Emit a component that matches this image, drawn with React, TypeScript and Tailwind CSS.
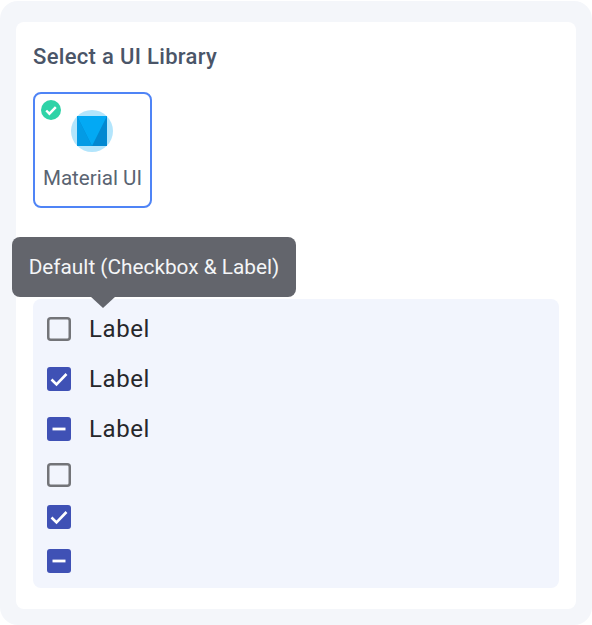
import React from "react";

const font = { fontFamily: "Roboto, sans-serif" };

function Box({ kind }: { kind: "empty" | "checked" | "mixed" }) {
  return (
    <svg width="24" height="24" viewBox="0 0 24 24" className="block shrink-0">
      {kind === "empty" ? (
        <rect x="1.25" y="1.25" width="21.5" height="21.5" rx="2.5" fill="none" stroke="#737478" strokeWidth="2.5" />
      ) : (
        <rect x="0" y="0" width="24" height="24" rx="3" fill="#3f51b5" />
      )}
      {kind === "checked" && <path d="M4.5 12.5l5 5 10-10.5" fill="none" stroke="#fff" strokeWidth="2.6" />}
      {kind === "mixed" && <path d="M5.5 12h13" fill="none" stroke="#fff" strokeWidth="2.8" />}
    </svg>
  );
}

function Row({ kind, label, h }: { kind: "empty" | "checked" | "mixed"; label?: boolean; h: string }) {
  return (
    <div className={`flex items-center gap-[18px] pl-[14px] ${h}`}>
      <Box kind={kind} />
      {label && <span className="text-[24px] leading-[28px] tracking-[0.6px] text-[#26272b]">Label</span>}
    </div>
  );
}

export default function App() {
  return (
    <div style={font} className="h-[625px] w-[592px] bg-white pt-px">
      <div className="h-[624px] w-[592px] rounded-[18px] bg-[#f4f6fa] px-4 pt-[21px]">
        <div className="relative h-[587px] w-[560px] rounded-lg bg-white px-[17px] pt-[22px]">
          <div className="text-[22px] font-medium leading-[26px] tracking-[0.32px] text-[#4a5568]">Select a UI Library</div>
          <div className="relative mt-[22px] flex h-[116px] w-[119px] flex-col items-center rounded-lg border-2 border-[#4f84f6] pt-[16px]">
            <svg width="20" height="20" viewBox="0 0 20 20" className="absolute left-[6px] top-[6px]">
              <circle cx="10" cy="10" r="10" fill="#2fd3a7" />
              <path d="M5.2 10.5l3.2 3.2 6.4-6.6" fill="none" stroke="#fff" strokeWidth="2.4" />
            </svg>
            <svg width="42" height="42" viewBox="0 0 42 42" className="-ml-px block">
              <circle cx="21" cy="21" r="21" fill="#b3e5fc" />
              <rect x="6" y="6" width="30" height="30" fill="#0288d1" />
              <path d="M6 6h30L21 36 6 6z" fill="#03a9f4" />
              <path d="M6 6l15 30H6z" fill="#039be5" />
            </svg>
            <div className="mt-[14px] text-[20.6px] leading-[24px] text-[#5a6472]">Material UI</div>
          </div>
          <div className="absolute left-[-4px] top-[215px] flex h-[60px] w-[284px] items-center justify-center rounded-lg bg-[#63656c] pt-px text-[20.8px] text-[#f4f5f7]">
            Default (Checkbox &amp; Label)
            <div className="absolute bottom-[-11px] left-[78px] h-0 w-0 border-x-[13px] border-t-[12px] border-x-transparent border-t-[#63656c]" />
          </div>
          <div className="mt-[91px] h-[289px] w-[526px] rounded-lg bg-[#f2f5fd] pt-[4.5px]">
            <Row kind="empty" label h="h-[50px]" />
            <Row kind="checked" label h="h-[50px]" />
            <Row kind="mixed" label h="h-[50px]" />
            <Row kind="empty" h="h-[42px]" />
            <Row kind="checked" h="h-[42.6px]" />
            <Row kind="mixed" h="h-[45.4px]" />
          </div>
        </div>
      </div>
    </div>
  );
}
